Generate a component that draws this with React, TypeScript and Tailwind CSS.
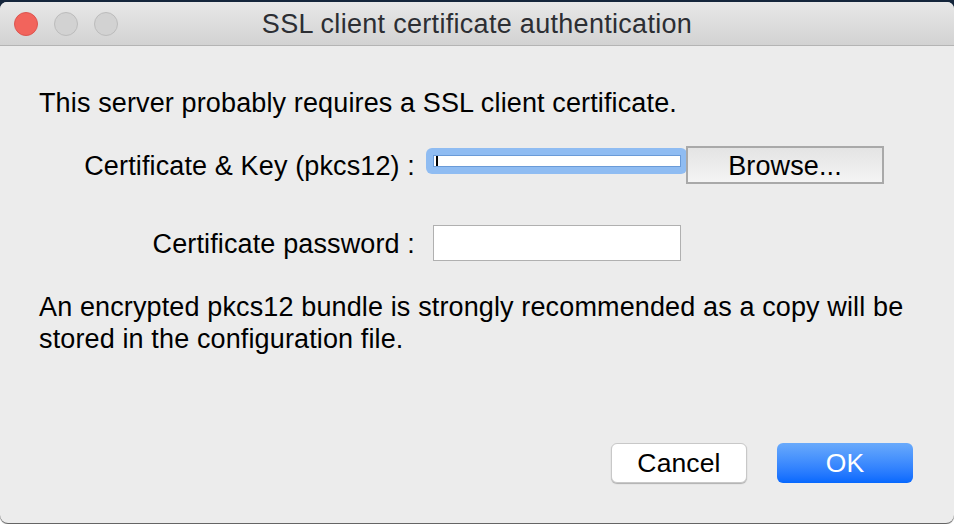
import React from 'react';

const font = 'font-["Liberation_Sans",Arial,sans-serif]';

function TrafficLight({ color }: { color: string }) {
  return <div className={`w-6 h-6 rounded-full border ${color}`} />;
}

export default function App() {
  return (
    <div className={`w-[954px] h-[524px] overflow-hidden bg-[linear-gradient(#14253b_0,#14253b_40px,#ffffff_40px)] ${font}`}>
      <div className="w-[954px] h-[524px] pt-[2px]">
        <div className="h-[521px] flex flex-col rounded-t-[7px] rounded-b-[8px] overflow-hidden bg-[#ececec] shadow-[0_1px_1px_#555555]">
          <header className="relative h-[44px] shrink-0 flex items-center pl-[14px] gap-4 border-b border-[#b4b4b4] bg-gradient-to-b from-[#e8e8e8] to-[#d2d2d2]">
            <TrafficLight color="bg-[#f2645c] border-[#dc5550]" />
            <TrafficLight color="bg-[#d2d2d2] border-[#bcbcbc]" />
            <TrafficLight color="bg-[#d2d2d2] border-[#bcbcbc]" />
            <h1 className="absolute inset-x-0 top-[7px] text-center text-[27px] tracking-[0.3px] leading-[30px] font-normal text-[#2c2e33]">
              SSL client certificate authentication
            </h1>
          </header>

          <main className="flex-1 flex flex-col text-[27px] tracking-[0.13px] leading-[32px] text-black pl-[39px] pr-[40px]">
            <p className="mt-[41px] whitespace-nowrap">This server probably requires a SSL client certificate.</p>

            <div className="flex items-start mt-[27px] h-[38px]">
              <label className="w-[376px] text-right mt-[4px] whitespace-pre">Certificate &amp; Key (pkcs12) :</label>
              <div className="ml-[11px] mt-[2px] w-[261px] h-[26px] shrink-0 pl-[7px] pr-[6px] py-[7px] bg-[#8fbcf2] rounded-[6px]">
                <div className="relative h-[12px] bg-white border border-[#6a9bd8]">
                  <div className="absolute left-[2px] top-0 bottom-0 w-[2px] bg-black" />
                </div>
              </div>
              <button className="relative -ml-[1px] w-[198px] h-[38px] shrink-0 border-2 border-[#a9a9a9] bg-gradient-to-b from-[#e4e4e4] to-[#f4f4f4] text-center leading-[36px]">
                Browse...
              </button>
            </div>

            <div className="flex items-start mt-[41px] h-[36px]">
              <label className="w-[376px] text-right mt-[3px]">Certificate password :</label>
              <div className="ml-[18px] w-[248px] h-[36px] bg-white border border-[#b0b0b0]" />
            </div>

            <p className="mt-[30px] whitespace-nowrap">
              An encrypted pkcs12 bundle is strongly recommended as a copy will be
              <br />
              stored in the configuration file.
            </p>

            <div className="flex justify-end gap-[30px] mt-[87px] -translate-x-[1px] translate-y-[1px] text-[26.5px]">
              <button className="w-[136px] h-[40px] rounded-[6px] bg-white border border-[#c8c8c8] shadow-[0_1px_1px_#b0b0b0] text-center leading-[38px]">
                Cancel
              </button>
              <button className="w-[136px] h-[40px] rounded-[6px] bg-gradient-to-b from-[#69aafb] to-[#0468fe] text-white text-center leading-[40px]">
                OK
              </button>
            </div>
          </main>
        </div>
      </div>
    </div>
  );
}
